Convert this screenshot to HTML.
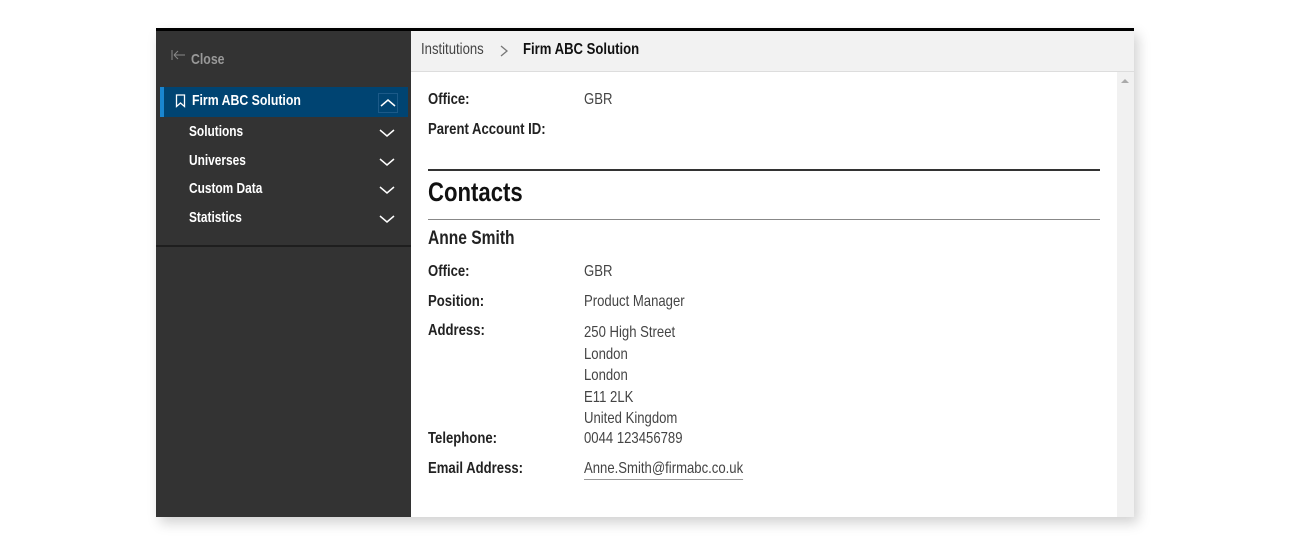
<!DOCTYPE html>
<html><head><meta charset="utf-8"><style>
*{margin:0;padding:0;box-sizing:border-box}
body{width:1291px;height:548px;background:#fff;position:relative;overflow:hidden;font-family:"Liberation Sans",sans-serif}
.a{position:absolute;white-space:nowrap}
.t{transform:scaleX(0.82);transform-origin:0 0}
.frame{position:absolute;left:156px;top:28px;width:978px;height:489px;box-shadow:4px 6px 12px rgba(0,0,0,0.18)}
.top{position:absolute;left:156px;top:28px;width:978px;height:3px;background:#000}
.side{position:absolute;left:156px;top:31px;width:255px;height:486px;background:#333}
.sep{position:absolute;left:156px;top:245px;width:255px;height:2px;background:#1e1e1e}
.hdr{position:absolute;left:411px;top:31px;width:723px;height:41px;background:#f2f2f2;border-bottom:1px solid #ddd}
.main{position:absolute;left:411px;top:72px;width:706px;height:445px;background:#fff}
.sb{position:absolute;left:1117px;top:72px;width:17px;height:445px;background:#f1f1f1}
.nav{color:#fff;font-weight:bold;font-size:15px}
.lab{color:#222;font-weight:bold;font-size:16px;left:428px}
.val{color:#444;font-size:16px;left:584px}
</style></head><body>
<div class="frame"></div>
<div class="side"></div>
<div class="sep"></div>
<div class="top"></div>
<div class="hdr"></div>
<div class="main"></div>
<div class="sb"></div>
<svg class="a" style="left:1120px;top:78px" width="10" height="6"><path d="M1 5 L5 1 L9 5Z" fill="#aaa"/></svg>

<svg class="a" style="left:171px;top:50px" width="16" height="12"><path d="M1 0V10M3 5H14M3 5L7 1M3 5L7 9" stroke="#888" stroke-width="1" fill="none"/></svg>
<div class="a t" style="left:191px;top:51px;color:#999;font-size:15px;font-weight:bold">Close</div>

<div class="a" style="left:160px;top:87px;width:248px;height:30px;background:#004472"></div>
<div class="a" style="left:160px;top:87px;width:4px;height:30px;background:#1a86d0"></div>
<svg class="a" style="left:175px;top:94px" width="11" height="14"><path d="M1.5 1H9.5V12.5L5.5 9L1.5 12.5Z" stroke="#fff" stroke-width="1.3" fill="none"/></svg>
<div class="a nav t" style="left:192px;top:92px">Firm ABC Solution</div>
<div class="a" style="left:378px;top:93px;width:20px;height:20px;border:1px solid #1c5a88"></div>
<svg class="a" style="left:380px;top:98px" width="16" height="10"><path d="M1 8L8 2L15 8" stroke="#fff" stroke-width="1.5" fill="none"/></svg>

<div class="a nav t" style="left:189px;top:124px;font-size:14.5px">Solutions</div>
<div class="a nav t" style="left:189px;top:153px;font-size:14.5px">Universes</div>
<div class="a nav t" style="left:189px;top:181px;font-size:14.5px">Custom Data</div>
<div class="a nav t" style="left:189px;top:210px;font-size:14.5px">Statistics</div>
<svg class="a" style="left:379px;top:128px" width="16" height="100"><g stroke="#fff" stroke-width="1.5" fill="none"><path d="M1 2L8 8L15 2"/><path d="M1 31L8 37L15 31"/><path d="M1 59L8 65L15 59"/><path d="M1 88L8 94L15 88"/></g></svg>

<div class="a t" style="left:421px;top:41px;color:#444;font-size:16px">Institutions</div>
<svg class="a" style="left:499px;top:44px" width="10" height="14"><path d="M2 2L8 7L2 12" stroke="#777" stroke-width="1.3" fill="none"/></svg>
<div class="a t" style="left:523px;top:41px;color:#111;font-size:16px;font-weight:bold">Firm ABC Solution</div>

<div class="a lab t" style="top:91px">Office:</div><div class="a val t" style="top:91px">GBR</div>
<div class="a lab t" style="top:121px">Parent Account ID:</div>

<div class="a" style="left:428px;top:169px;width:672px;height:2px;background:#333"></div>
<div class="a t" style="left:428px;top:177px;color:#111;font-size:27px;font-weight:bold">Contacts</div>
<div class="a" style="left:428px;top:219px;width:672px;height:1px;background:#888"></div>
<div class="a t" style="left:428px;top:228px;color:#222;font-size:19px;font-weight:bold">Anne Smith</div>

<div class="a lab t" style="top:263px">Office:</div><div class="a val t" style="top:263px">GBR</div>
<div class="a lab t" style="top:293px">Position:</div><div class="a val t" style="top:293px">Product Manager</div>
<div class="a lab t" style="top:322px">Address:</div>
<div class="a val t" style="top:322px;line-height:21.5px">250 High Street<br>London<br>London<br>E11 2LK<br>United Kingdom</div>
<div class="a lab t" style="top:430px">Telephone:</div><div class="a val t" style="top:430px">0044 123456789</div>
<div class="a lab t" style="top:460px">Email Address:</div><div class="a val t" style="top:460px;border-bottom:1px solid #999;padding-bottom:1px">Anne.Smith@firmabc.co.uk</div>
</body></html>
